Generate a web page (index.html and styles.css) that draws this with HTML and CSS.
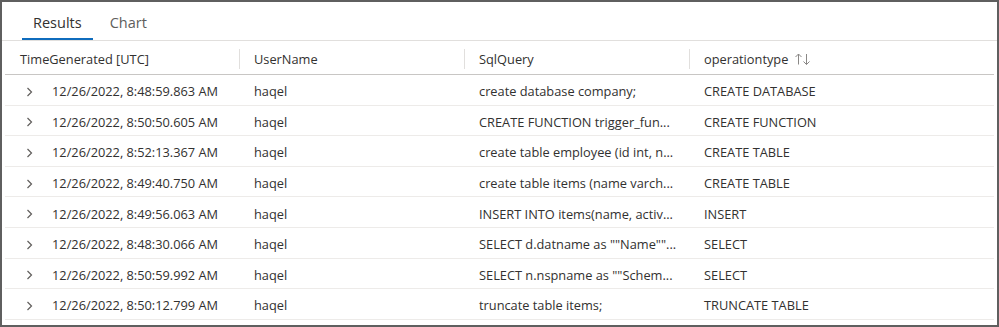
FILE: index.html
```html
<!DOCTYPE html>
<html lang="en">
<head>
<meta charset="utf-8">
<title>Results</title>
<link rel="stylesheet" href="styles.css">
</head>
<body>
<div class="frame">
  <div class="tabs">
    <div class="tab active">Results</div>
    <div class="tab">Chart</div>
  </div>
  <div class="grid">
    <div class="hrow">
      <div class="hcell first">TimeGenerated [UTC]</div>
      <div class="hcell sep">UserName</div>
      <div class="hcell sep">SqlQuery</div>
      <div class="hcell sep">operationtype
        <svg class="sort" width="18" height="14" viewBox="0 0 18 14"><path d="M4.5 12.5V2M1.5 5L4.5 2 7.5 5" fill="none" stroke="#8a8886" stroke-width="1"/><path d="M12.5 2V12.5M9.5 9.5L12.5 12.5l3-3" fill="none" stroke="#8a8886" stroke-width="1"/></svg>
      </div>
    </div>
    <div class="row"><div class="cell first"><svg class="chev" width="7" height="10" viewBox="0 0 7 10"><path d="M1.5 1L5.5 5 1.5 9" fill="none" stroke="#605e5c" stroke-width="1.2"/></svg>12/26/2022, 8:48:59.863 AM</div><div class="cell">haqel</div><div class="cell">create database company;</div><div class="cell">CREATE DATABASE</div></div>
    <div class="row"><div class="cell first"><svg class="chev" width="7" height="10" viewBox="0 0 7 10"><path d="M1.5 1L5.5 5 1.5 9" fill="none" stroke="#605e5c" stroke-width="1.2"/></svg>12/26/2022, 8:50:50.605 AM</div><div class="cell">haqel</div><div class="cell">CREATE FUNCTION trigger_fun...</div><div class="cell">CREATE FUNCTION</div></div>
    <div class="row"><div class="cell first"><svg class="chev" width="7" height="10" viewBox="0 0 7 10"><path d="M1.5 1L5.5 5 1.5 9" fill="none" stroke="#605e5c" stroke-width="1.2"/></svg>12/26/2022, 8:52:13.367 AM</div><div class="cell">haqel</div><div class="cell">create table employee (id int, n...</div><div class="cell">CREATE TABLE</div></div>
    <div class="row"><div class="cell first"><svg class="chev" width="7" height="10" viewBox="0 0 7 10"><path d="M1.5 1L5.5 5 1.5 9" fill="none" stroke="#605e5c" stroke-width="1.2"/></svg>12/26/2022, 8:49:40.750 AM</div><div class="cell">haqel</div><div class="cell">create table items (name varch...</div><div class="cell">CREATE TABLE</div></div>
    <div class="row"><div class="cell first"><svg class="chev" width="7" height="10" viewBox="0 0 7 10"><path d="M1.5 1L5.5 5 1.5 9" fill="none" stroke="#605e5c" stroke-width="1.2"/></svg>12/26/2022, 8:49:56.063 AM</div><div class="cell">haqel</div><div class="cell">INSERT INTO items(name, activ...</div><div class="cell">INSERT</div></div>
    <div class="row"><div class="cell first"><svg class="chev" width="7" height="10" viewBox="0 0 7 10"><path d="M1.5 1L5.5 5 1.5 9" fill="none" stroke="#605e5c" stroke-width="1.2"/></svg>12/26/2022, 8:48:30.066 AM</div><div class="cell">haqel</div><div class="cell">SELECT d.datname as ""Name""...</div><div class="cell">SELECT</div></div>
    <div class="row"><div class="cell first"><svg class="chev" width="7" height="10" viewBox="0 0 7 10"><path d="M1.5 1L5.5 5 1.5 9" fill="none" stroke="#605e5c" stroke-width="1.2"/></svg>12/26/2022, 8:50:59.992 AM</div><div class="cell">haqel</div><div class="cell">SELECT n.nspname as ""Schem...</div><div class="cell">SELECT</div></div>
    <div class="row"><div class="cell first"><svg class="chev" width="7" height="10" viewBox="0 0 7 10"><path d="M1.5 1L5.5 5 1.5 9" fill="none" stroke="#605e5c" stroke-width="1.2"/></svg>12/26/2022, 8:50:12.799 AM</div><div class="cell">haqel</div><div class="cell">truncate table items;</div><div class="cell">TRUNCATE TABLE</div></div>
  </div>
</div>
</body>
</html>
```

FILE: styles.css
```css
* { box-sizing: border-box; }
html, body { margin: 0; padding: 0; background: #fff; }
body {
  font-family: "Open Sans", "Noto Sans", sans-serif;
  color: #323130;
  font-size: 12.8px;
}
.frame {
  width: 999px;
  height: 327px;
  border: 2px solid #5f5f5f;
  overflow: hidden;
  background: #fff;
}
.tabs {
  display: flex;
  height: 39px;
  padding-left: 20px;
  border-bottom: 1px solid #e1dfdd;
}
.tab {
  display: flex;
  align-items: center;
  padding: 4px 11px 0;
  font-size: 14.5px;
  color: #605e5c;
  border-bottom: 2px solid transparent;
  margin-right: 6px;
}
.tab.active {
  color: #323130;
  border-bottom-color: #0f6cbd;
}
.grid {
  margin: 0 3px 0 3px;
}
.hrow, .row {
  display: grid;
  grid-template-columns: 234px 225px 225px 1fr;
}
.hrow {
  height: 34px;
  border-bottom: 1px solid #c8c6c4;
}
.hcell {
  display: flex;
  align-items: center;
  padding: 2px 0 0 15px;
  position: relative;
  white-space: nowrap;
}
.hcell.sep::before {
  content: "";
  position: absolute;
  left: 0;
  top: 8px;
  height: 20px;
  border-left: 1px solid #e1dfdd;
}
.sort { margin-left: 6px; }
.row {
  height: 30.6px;
  border-bottom: 1px solid #edebe9;
}
.cell {
  display: flex;
  align-items: center;
  padding: 3px 0 0 15px;
  white-space: nowrap;
  overflow: hidden;
}
.cell.first { padding-left: 21px; }
.chev {
  flex: none;
  margin-right: 19px;
  margin-top: 1px;
}
```
